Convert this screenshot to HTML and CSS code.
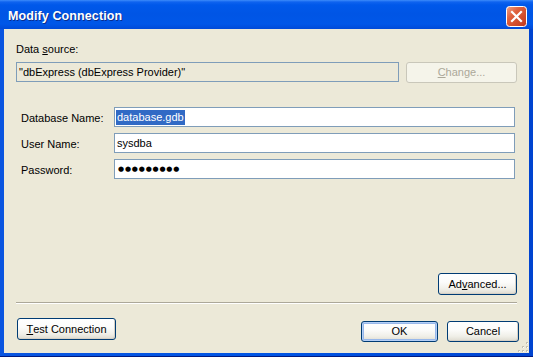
FILE: index.html
```html
<!DOCTYPE html>
<html>
<head>
<meta charset="utf-8">
<link rel="stylesheet" href="styles.css">
</head>
<body>
<div class="window">
  <div class="titlebar">
    <span class="title">Modify Connection</span>
    <span class="close">
      <svg width="21" height="21" viewBox="0 0 21 21">
        <defs>
          <linearGradient id="cg" x1="0" y1="0" x2="1" y2="1">
            <stop offset="0" stop-color="#f0a488"/>
            <stop offset="0.35" stop-color="#e0623e"/>
            <stop offset="1" stop-color="#c0361a"/>
          </linearGradient>
        </defs>
        <rect x="0.5" y="0.5" width="20" height="20" rx="3" fill="url(#cg)" stroke="#ffffff"/>
        <path d="M6 6 L15 15 M15 6 L6 15" stroke="#ffffff" stroke-width="2.2" stroke-linecap="square"/>
      </svg>
    </span>
  </div>
  <div class="client">
    <div class="lbl">Data <u>s</u>ource:</div>
    <div class="ds-row">
      <div class="ds-box">"dbExpress (dbExpress Provider)"</div>
      <div class="btn disabled change"><u>C</u>hange...</div>
    </div>
    <div class="fields">
      <div class="flabel">Database Name:</div>
      <div class="input"><span class="sel">database.gdb</span></div>
      <div class="flabel">User Name:</div>
      <div class="input">sysdba</div>
      <div class="flabel">Password:</div>
      <div class="input"><span class="dots">●●●●●●●●●</span></div>
    </div>
    <div class="spacer"></div>
    <div class="adv-row">
      <div class="btn adv">Ad<u>v</u>anced...</div>
    </div>
    <div class="sep"></div>
    <div class="bottom-row">
      <div class="btn test"><u>T</u>est Connection</div>
      <div class="right">
        <div class="btn ok">OK</div>
        <div class="btn cancel">Cancel</div>
      </div>
    </div>
    <svg class="grip" width="12" height="12" viewBox="0 0 12 12">
      <g fill="#c4c0b0">
        <rect x="9" y="1" width="2" height="2"/>
        <rect x="5" y="5" width="2" height="2"/><rect x="9" y="5" width="2" height="2"/>
        <rect x="1" y="9" width="2" height="2"/><rect x="5" y="9" width="2" height="2"/><rect x="9" y="9" width="2" height="2"/>
      </g>
      <g fill="#ffffff">
        <rect x="10" y="2" width="1" height="1"/>
        <rect x="6" y="6" width="1" height="1"/><rect x="10" y="6" width="1" height="1"/>
        <rect x="2" y="10" width="1" height="1"/><rect x="6" y="10" width="1" height="1"/><rect x="10" y="10" width="1" height="1"/>
      </g>
    </svg>
  </div>
</div>
</body>
</html>
```
FILE: styles.css
```css
html, body {
  margin: 0;
  padding: 0;
  background: #ffffff;
}
.window {
  width: 533px;
  height: 357px;
  display: flex;
  flex-direction: column;
  background: linear-gradient(to right, #0a55e0 0, #0055e5 50%, #0044d0 100%);
  font-family: "Liberation Sans", Arial, sans-serif;
  font-size: 11px;
  color: #000000;
  box-sizing: border-box;
  border-bottom: 1px solid #001a80;
}
.titlebar {
  height: 29px;
  box-sizing: border-box;
  flex: none;
  display: flex;
  align-items: center;
  justify-content: space-between;
  padding: 3px 6px 0 8px;
  background: linear-gradient(to bottom, #3d8cfa 0, #0f63ef 2px, #0058ea 5px, #0055e5 14px, #0057e8 24px, #004ad8 29px);
}
.title {
  color: #ffffff;
  font-weight: bold;
  font-size: 12.5px;
  text-shadow: 1px 1px 0 #0a2c8c;
  letter-spacing: 0.1px;
}
.close {
  display: flex;
  width: 21px;
  height: 21px;
  margin-top: 1px;
}
.client {
  flex: 1;
  margin: 0 4px 3px 4px;
  background: #ece9d8;
  display: flex;
  flex-direction: column;
  padding: 14px 12px 11px 12px;
  position: relative;
}
.lbl {
  line-height: 13px;
  height: 13px;
}
.ds-row {
  margin-top: 6px;
  display: flex;
  align-items: flex-start;
  gap: 7px;
}
.ds-box {
  width: 383px;
  height: 20px;
  box-sizing: border-box;
  border: 1px solid #7f9db9;
  background: #ece9d8;
  line-height: 18px;
  padding-left: 2px;
}
.btn {
  box-sizing: border-box;
  border: 1px solid #003c74;
  border-radius: 3px;
  background: linear-gradient(to bottom, #ffffff 0, #fcfcfb 40%, #f0efe8 75%, #dedbd0 100%);
  display: flex;
  align-items: center;
  justify-content: center;
  line-height: 13px;
  box-shadow: inset -1px -1px 0 #d6d0c5;
}
.btn.disabled {
  border-color: #c9c7ba;
  background: #f5f4ea;
  color: #aca899;
  box-shadow: none;
}
.change {
  width: 111px;
  height: 21px;
}
.fields {
  margin-top: 24px;
  padding-left: 5px;
  display: grid;
  grid-template-columns: 93px 401px;
  row-gap: 6px;
  align-items: center;
}
.flabel {
  line-height: 13px;
  padding-top: 2px;
}
.input {
  height: 20px;
  box-sizing: border-box;
  border: 1px solid #7f9db9;
  background: #ffffff;
  padding-left: 2px;
  line-height: 18px;
  display: flex;
  align-items: center;
}
.sel {
  background: #316ac5;
  color: #ffffff;
  line-height: 15px;
  padding: 0 1px;
  margin-left: -1px;
}
.dots {
  font-family: "DejaVu Sans", sans-serif;
  font-size: 7px;
  letter-spacing: 0.8px;
  padding-left: 1px;
}
.spacer {
  flex: 1;
}
.adv-row {
  display: flex;
  justify-content: flex-end;
}
.adv {
  width: 79px;
  height: 22px;
}
.sep {
  margin-top: 7px;
  height: 1px;
  background: #aca899;
  border-bottom: 1px solid #ffffff;
}
.bottom-row {
  margin-top: 14px;
  display: flex;
  justify-content: space-between;
  align-items: flex-start;
}
.test {
  width: 99px;
  height: 22px;
  margin-left: 1px;
}
.right {
  display: flex;
  gap: 9px;
  margin-top: 3px;
  margin-right: -2px;
}
.ok {
  width: 77px;
  height: 21px;
  box-shadow: inset 0 0 0 1px #b4cff6, inset 0 0 0 2px #98b8ea;
}
.cancel {
  width: 72px;
  height: 21px;
}
.grip {
  position: absolute;
  right: 0;
  bottom: 0;
}
```
